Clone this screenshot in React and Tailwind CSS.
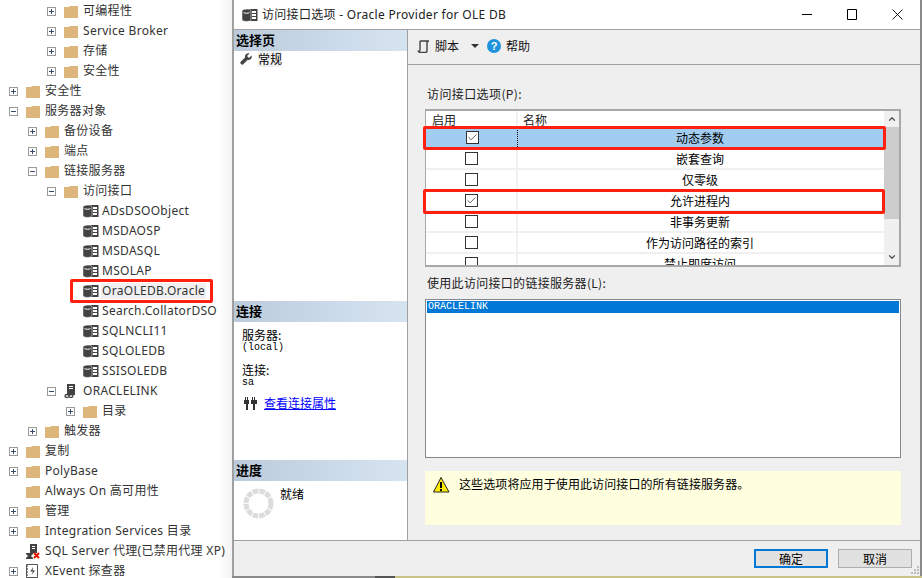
import React from 'react';
import { Check, ChevronUp, ChevronDown } from 'lucide-react';

const TREE_ROWS = [
    { level: 2, exp: '+', icon: 'folder', label: '可编程性' },
    { level: 2, exp: '+', icon: 'folder', label: 'Service Broker' },
    { level: 2, exp: '+', icon: 'folder', label: '存储' },
    { level: 2, exp: '+', icon: 'folder', label: '安全性' },
    { level: 0, exp: '+', icon: 'folder', label: '安全性' },
    { level: 0, exp: '-', icon: 'folder', label: '服务器对象' },
    { level: 1, exp: '+', icon: 'folder', label: '备份设备' },
    { level: 1, exp: '+', icon: 'folder', label: '端点' },
    { level: 1, exp: '-', icon: 'folder', label: '链接服务器' },
    { level: 2, exp: '-', icon: 'folder', label: '访问接口' },
    { level: 3, icon: 'db', label: 'ADsDSOObject' },
    { level: 3, icon: 'db', label: 'MSDAOSP' },
    { level: 3, icon: 'db', label: 'MSDASQL' },
    { level: 3, icon: 'db', label: 'MSOLAP' },
    { level: 3, icon: 'db', label: 'OraOLEDB.Oracle', selected: true },
    { level: 3, icon: 'db', label: 'Search.CollatorDSO' },
    { level: 3, icon: 'db', label: 'SQLNCLI11' },
    { level: 3, icon: 'db', label: 'SQLOLEDB' },
    { level: 3, icon: 'db', label: 'SSISOLEDB' },
    { level: 2, exp: '-', icon: 'link', label: 'ORACLELINK' },
    { level: 3, exp: '+', icon: 'folder', label: '目录' },
    { level: 1, exp: '+', icon: 'folder', label: '触发器' },
    { level: 0, exp: '+', icon: 'folder', label: '复制' },
    { level: 0, exp: '+', icon: 'folder', label: 'PolyBase' },
    { level: 0, icon: 'folder', label: 'Always On 高可用性' },
    { level: 0, exp: '+', icon: 'folder', label: '管理' },
    { level: 0, exp: '+', icon: 'folder', label: 'Integration Services 目录' },
    { level: 0, icon: 'agent', label: 'SQL Server 代理(已禁用代理 XP)' },
    { level: 0, exp: '+', icon: 'xevent', label: 'XEvent 探查器' },
];

const OPTIONS = [
    { name: '动态参数', checked: true, active: true },
    { name: '嵌套查询' },
    { name: '仅零级' },
    { name: '允许进程内', checked: true },
    { name: '非事务更新' },
    { name: '作为访问路径的索引' },
    { name: '禁止即席访问' },
];

const FolderIcon = () => (
    <svg width="14" height="13" viewBox="0 0 14 13">
        <path d="M0 2h5l1-1h8v12H0z" fill="#dcb67a" />
    </svg>
);

const DbIcon = () => (
    <svg width="16" height="14" viewBox="0 0 16 14">
        <path d="M4 1h11.500v12H4z" fill="#424242" />
        <path d="M10 3h4v2h-4zM10 6h4v2h-4zM10 9h4v2h-4z" fill="#fff" />
        <path d="M0 3c0-2.500 9-2.500 9 0v8.500c0 2.500-9 2.500-9 0z" fill="#424242" stroke="#fff" strokeWidth=".5" />
        <path d="M1.500 4.500c1 1 5 1 6 0" fill="none" stroke="#fff" strokeWidth="1" />
    </svg>
);

const LinkIcon = () => (
    <svg width="12" height="15" viewBox="0 0 12 15">
        <path d="M3 0h8v11H3z" fill="#424242" />
        <path d="M5 2h4v1H5zM5 4h4v1H5z" fill="#fff" />
        <path d="M1 12c0-2 4-2 4 0s-4 2-4 0zM5 12c0-2 4-2 4 0s-4 2-4 0z" fill="none" stroke="#424242" strokeWidth="1.300" />
    </svg>
);

const AgentIcon = () => (
    <svg width="14" height="15" viewBox="0 0 14 15">
        <path d="M4 0h7v9H4z" fill="#424242" />
        <path d="M6 2h3v1H6zM6 4h3v1H6z" fill="#fff" />
        <path d="M0 9h7v1l-2 2 2 2v1H0v-1l2-2-2-2z" fill="#424242" />
        <path d="M8 9l5 5M13 9l-5 5" stroke="#e51400" strokeWidth="2" />
    </svg>
);

const XEventIcon = () => (
    <svg width="12" height="14" viewBox="0 0 12 14">
        <path d="M.5.5h11v13H.5z" fill="#fff" stroke="#555" />
        <path d="M1 2h1M1 5h1M1 8h1M1 11h1" stroke="#222" />
        <path d="M7 3L4.500 7.500h2.500L5.500 11 9 6.500H6.500z" fill="#333" />
    </svg>
);

const TREE_ICONS = { folder: FolderIcon, db: DbIcon, link: LinkIcon, agent: AgentIcon, xevent: XEventIcon };

const Expander = ({ type }) => (
    <div className="w-[9px] h-[9px] border border-[#9a9a9a] bg-white flex items-center justify-center relative">
        <div className="w-[5px] h-px bg-[#3a4a6b]" />
        {type === '+' && <div className="absolute w-px h-[5px] bg-[#3a4a6b]" />}
    </div>
);

const TreeRow = ({ row }) => {
    const Icon = TREE_ICONS[row.icon];
    return (
        <div className="h-5 flex items-center shrink-0" style={{ paddingLeft: 9 + row.level * 19 }}>
            <div className="w-[17px] shrink-0">{row.exp && <Expander type={row.exp} />}</div>
            <div className="w-[19px] shrink-0 flex items-center">
                <Icon />
            </div>
            <span
                className={`text-[12px] tracking-[0.3px] text-[#333] whitespace-nowrap leading-4 ${
                    row.selected ? 'bg-[#f0f0f0] px-px -ml-px' : ''
                }`}
            >
                {row.label}
            </span>
        </div>
    );
};

const SectionHead = ({ children }) => (
    <div className="h-[21px] bg-gradient-to-r from-[#bccbdb] to-[#d6e4f2] pl-[2px] text-[13px] font-bold text-black leading-[19px]">
        {children}
    </div>
);

const CheckBox = ({ checked }) => (
    <div className="w-[13px] h-[13px] border border-[#333] bg-white flex items-center justify-center">
        {checked && <Check size={11} strokeWidth={2} className="text-[#555]" />}
    </div>
);

const OptionRow = ({ opt }) => (
    <div className={`h-[21px] shrink-0 flex border-b-2 ${opt.active ? 'bg-[#a3cdf0] border-[#a3cdf0]' : 'border-[#f0f0f0]'}`}>
        <div
            className={`w-[92px] shrink-0 flex items-center justify-center pl-px ${
                opt.active ? 'border-r border-dotted border-black' : 'border-r-2 border-[#f0f0f0]'
            }`}
        >
            <CheckBox checked={opt.checked} />
        </div>
        <div className="flex-1 pr-[2px] text-center text-[12px] leading-[20px] text-black">{opt.name}</div>
    </div>
);

const Spinner = () => (
    <svg width="31" height="31" viewBox="0 0 31 31">
        <circle cx="15.500" cy="15.500" r="12.500" fill="none" stroke="#dcdcdc" strokeWidth="5" strokeDasharray="5.600 1" />
    </svg>
);

const WarningIcon = () => (
    <svg width="17" height="16" viewBox="0 0 17 16">
        <path d="M8 .5L16 15H.5z" fill="#ffeb00" stroke="#222" />
        <path d="M7 5h2v6H7zM7 12h2v2H7z" fill="#000" />
    </svg>
);

const Grip = () => (
    <svg width="10" height="10" viewBox="0 0 10 10" className="absolute right-0 bottom-[1px]">
        <path d="M7 1h2v2H7zM4 4h2v2H4zM7 4h2v2H7zM1 7h2v2H1zM4 7h2v2H4zM7 7h2v2H7z" fill="#bdbdbd" />
    </svg>
);

const App = () => (
    <div className="relative w-[922px] h-[578px] overflow-hidden flex bg-white font-['Noto_Sans','Noto_Sans_CJK_SC',sans-serif]">
        {/* Object explorer */}
        <div className="w-[232px] shrink-0 flex flex-col pt-px bg-gradient-to-r from-white from-[94%] to-[#f3f3f3]">
            {TREE_ROWS.map((row, i) => (
                <TreeRow key={i} row={row} />
            ))}
        </div>

        {/* Dialog */}
        <div className="flex-1 h-[576px] flex flex-col border-x-2 border-l-[#a0a0a0] border-r-[#8a8a8a] bg-[#efefef] font-['Noto_Sans_CJK_SC','Noto_Sans',sans-serif]">
            <div className="h-[29px] shrink-0 bg-white flex items-center pl-[8px]">
                <DbIcon />
                <span className="ml-[4px] text-[12px] tracking-[0.3px] text-[#222] font-['Noto_Sans','Noto_Sans_CJK_SC',sans-serif]">
                    访问接口选项 - Oracle Provider for OLE DB
                </span>
                <div className="ml-auto flex items-center pr-[17px] gap-[35px]">
                    <svg width="10" height="11" viewBox="0 0 10 11">
                        <path d="M0 5.500h10" stroke="#000" />
                    </svg>
                    <svg width="10" height="11" viewBox="0 0 10 11">
                        <path d="M.5.5h9v10h-9z" fill="none" stroke="#000" />
                    </svg>
                    <svg width="11" height="11" viewBox="0 0 11 11">
                        <path d="M.5.5l10 10M10.500.5l-10 10" stroke="#000" strokeWidth=".9" />
                    </svg>
                </div>
            </div>

            <div className="flex-1 flex border-y border-[#a0a0a0] min-h-0">
                {/* Left pane */}
                <div className="w-[174px] shrink-0 bg-white border-r border-[#a0a0a0] flex flex-col">
                    <SectionHead>选择页</SectionHead>
                    <div className="h-[16px] flex items-center pl-[6px]">
                        <svg width="12" height="12" viewBox="0 0 12 12">
                            <path d="M11.500 2.500L9 5 7 3l2.500-2.500C7.500-.5 4.500 1 5 4.500L.5 9c-1 1 1.500 3.500 2.500 2.500L7.500 7c3.500.5 5-2.500 4-4.500z" fill="#444" />
                        </svg>
                        <span className="ml-[6px] text-[12px] text-black bg-[#f0f0f0] leading-4">常规</span>
                    </div>
                    <div className="h-[234px]" />
                    <SectionHead>连接</SectionHead>
                    <div className="pl-[8px] pt-[5px] h-[138px] text-black">
                        <div className="text-[12px] leading-[15px]">服务器:</div>
                        <div className="text-[10px] leading-[12px] font-['Liberation_Mono',monospace]">(local)</div>
                        <div className="text-[12px] leading-[15px] mt-[8px]">连接:</div>
                        <div className="text-[10px] leading-[12px] font-['Liberation_Mono',monospace]">sa</div>
                        <div className="flex items-center mt-[6px] pl-px">
                            <svg width="15" height="13" viewBox="0 0 15 13">
                                <path d="M2 0h1v3h1V0h1v3h1v4H5v6H3V7H1V3h1zM9 0h1v3h1V0h1v3h2v4h-2v6h-2V7H8V3h1z" fill="#333" />
                            </svg>
                            <a className="ml-[6px] text-[12px] text-[#0000ff] underline leading-4">查看连接属性</a>
                        </div>
                    </div>
                    <SectionHead>进度</SectionHead>
                    <div className="flex pl-[9px] pt-[7px]">
                        <Spinner />
                        <span className="ml-[6px] -mt-[2px] text-[12px] text-black leading-[16px]">就绪</span>
                    </div>
                </div>

                {/* Right pane */}
                <div className="flex-1 min-w-0 flex flex-col">
                    <div className="h-[35px] shrink-0 border-b border-[#a0a0a0] flex items-center pb-[2px] pl-[9px] text-[12px] text-[#111]">
                        <svg width="13" height="13" viewBox="0 0 13 13">
                            <path d="M3 1h9M3 1v9c0 1.500-2 2-2 .5M12 1c-1.500 0-2 1-2 2v8c0 1-1 1.500-2 1.500H1.500" fill="none" stroke="#444" strokeWidth="1.400" />
                        </svg>
                        <span className="ml-[5px]">脚本</span>
                        <div className="ml-[12px] w-0 h-0 border-x-[4px] border-x-transparent border-t-[4px] border-t-[#333]" />
                        <div className="ml-[8px] w-[14px] h-[14px] rounded-full bg-[#1e93dc] text-white text-[11px] font-bold leading-[14px] text-center font-['Liberation_Sans',sans-serif]">
                            ?
                        </div>
                        <span className="ml-[5px]">帮助</span>
                    </div>

                    <div className="flex-1 min-h-0 pl-[17px] pr-[19px] flex flex-col">
                        <div className="mt-[21px] h-[16px] pl-[2px] text-[12px] leading-4 tracking-[0.4px] text-[#222]">访问接口选项(P):</div>
                        <div className="mt-[7px] h-[158px] shrink-0 border-2 border-[#a8a8a8] bg-white flex overflow-hidden border-l-[1px]">
                            <div className="flex-1 min-w-0 flex flex-col">
                                <div className="h-[17px] shrink-0 flex text-[12px] leading-[18px] text-[#222]">
                                    <div className="w-[92px] pl-[6px] border-r-2 border-[#f0f0f0]">启用</div>
                                    <div className="pl-[5px]">名称</div>
                                </div>
                                {OPTIONS.map((opt) => (
                                    <OptionRow key={opt.name} opt={opt} />
                                ))}
                            </div>
                            <div className="w-[15px] shrink-0 bg-[#f0f0f0] flex flex-col items-center">
                                <div className="h-[16px] flex items-center shrink-0">
                                    <ChevronUp size={10} strokeWidth={3} className="text-[#555]" />
                                </div>
                                <div className="h-[92px] w-full shrink-0 bg-[#cdcdcd]" />
                                <div className="flex-1 flex items-end pb-[3px]">
                                    <ChevronDown size={10} strokeWidth={3} className="text-[#555]" />
                                </div>
                            </div>
                        </div>
                        <div className="mt-[8px] h-[16px] pl-[2px] text-[12px] leading-4 tracking-[0.3px] text-[#222]">使用此访问接口的链接服务器(L):</div>
                        <div className="mt-[8px] h-[159px] shrink-0 border border-[#828790] bg-white p-px">
                            <div className="h-[12px] bg-[#0078d7] text-white text-[10px] leading-[12px] pl-px font-['Liberation_Mono',monospace]">
                                ORACLELINK
                            </div>
                        </div>
                        <div className="mt-[13px] h-[54px] shrink-0 bg-[#ffffdf] flex pl-[8px] pt-[6px]">
                            <WarningIcon />
                            <span className="ml-[9px] text-[12px] text-black leading-[14px] tracking-[0.1px]">
                                这些选项将应用于使用此访问接口的所有链接服务器。
                            </span>
                        </div>
                    </div>
                </div>
            </div>

            <div className="h-[35px] shrink-0 flex items-start justify-end pt-[8px] pr-[8px] gap-[10px] relative">
                <button className="w-[74px] h-[19px] border-2 border-[#0078d7] bg-[#e1e1e1] text-[12px] leading-[14px] text-black">确定</button>
                <button className="w-[74px] h-[19px] border border-[#adadad] bg-[#e1e1e1] text-[12px] leading-[16px] text-black">取消</button>
                <Grip />
            </div>
        </div>

        {/* what shows under the dialog's bottom edge */}
        <div className="absolute left-[232px] right-0 bottom-0 h-[2px] flex">
            <div className="w-[143px] bg-[#8a8a8a]" />
            <div className="w-[20px] bg-[#555]" />
            <div className="flex-1 bg-[#c8c488]" />
        </div>

        {/* red annotation frames */}
        <div className="absolute left-[70px] top-[279px] w-[143px] h-[24px] border-[3px] border-[#ff2010] rounded-[2px]" />
        <div className="absolute left-[423px] top-[126px] w-[463px] h-[24px] border-[3px] border-[#ff2010] rounded-[2px]" />
        <div className="absolute left-[423px] top-[189px] w-[462px] h-[25px] border-[3px] border-[#ff2010] rounded-[2px]" />
    </div>
);

export default App;
